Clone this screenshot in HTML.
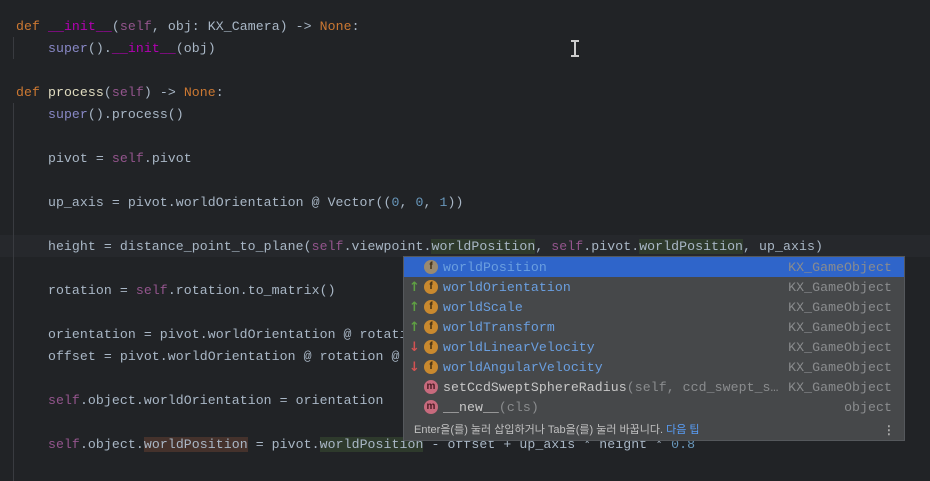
<!DOCTYPE html>
<html><head><style>
body{margin:0;width:930px;height:481px;background:#212326;overflow:hidden;position:relative;font-family:"Liberation Mono",monospace;}
.l{position:absolute;left:16px;height:22px;line-height:23px;font-size:13.2px;letter-spacing:0.075px;color:#a9b7c6;white-space:pre;}
.k{color:#cc7832}.s{color:#94558d}.m{color:#b200b2}.b{color:#8888c6}.n{color:#6897bb}.f{color:#e0dcc0}
.g{position:absolute;left:13px;width:1px;background:#393b40}
#cl{position:absolute;left:0;top:235px;width:930px;height:22px;background:#26282c}
#pop{position:absolute;left:403px;top:256px;width:502px;height:185px;background:#46484a;border:1px solid #55585c;box-sizing:border-box;font-size:13.2px;letter-spacing:0.075px}
.r{position:absolute;left:0;width:500px;height:20px;line-height:21px;white-space:pre}
.sel{background:#2f65ca}
.ic{position:absolute;left:20px;top:3px;width:14px;height:14px;border-radius:7px;background:#c9892f;color:#3b2a10;font:bold 10px/14px "Liberation Sans",sans-serif;text-align:center;letter-spacing:0}
.mi{background:#c76a7d;color:#4a1a22}
.nm{position:absolute;left:39px;color:#6a9fe0}
.ty{position:absolute;right:12px;color:#8a8c8e}
.ar{position:absolute;left:5px;font-family:"DejaVu Sans",sans-serif;font-size:13px;font-weight:bold}
.gr{color:#5fa043}.rd{color:#d25252}
</style></head><body>
<div id="cl"></div>
<div class="g" style="top:37px;height:22px"></div>
<div class="g" style="top:103px;height:378px"></div>
<div class="l" style="top:15px"><span class="k">def</span> <span class="m">__init__</span>(<span class="s">self</span>, obj: KX_Camera) -&gt; <span class="k">None</span>:</div>
<div class="l" style="top:37px">    <span class="b">super</span>().<span class="m">__init__</span>(obj)</div>
<div class="l" style="top:81px"><span class="k">def</span> <span class="f">process</span>(<span class="s">self</span>) -&gt; <span class="k">None</span>:</div>
<div class="l" style="top:103px">    <span class="b">super</span>().process()</div>
<div class="l" style="top:147px">    pivot = <span class="s">self</span>.pivot</div>
<div class="l" style="top:191px">    up_axis = pivot.worldOrientation @ Vector((<span class="n">0</span>, <span class="n">0</span>, <span class="n">1</span>))</div>
<div class="l" style="top:235px">    height = distance_point_to_plane(<span class="s">self</span>.viewpoint.<span style="background:#2e3a2c">worldPosition</span>, <span class="s">self</span>.pivot.<span style="background:#2e3a2c">worldPosition</span>, up_axis)</div>
<div class="l" style="top:279px">    rotation = <span class="s">self</span>.rotation.to_matrix()</div>
<div class="l" style="top:323px">    orientation = pivot.worldOrientation @ rotation</div>
<div class="l" style="top:345px">    offset = pivot.worldOrientation @ rotation @</div>
<div class="l" style="top:389px">    <span class="s">self</span>.object.worldOrientation = orientation</div>
<div class="l" style="top:433px">    <span class="s">self</span>.object.<span style="background:#45322c">worldPosition</span> = pivot.<span style="background:#2e3a2c">worldPosition</span> - offset + up_axis * height * <span class="n">0.8</span></div>
<div style="position:absolute;left:574px;top:40px;width:2px;height:17px;background:#ccc"></div>
<div style="position:absolute;left:571px;top:40px;width:8px;height:2px;background:#ccc"></div>
<div style="position:absolute;left:571px;top:55px;width:8px;height:2px;background:#ccc"></div>
<div id="pop">
<div class="r sel" style="top:0"><span class="ic" style="background:#9a8a70">f</span><span class="nm">worldPosition</span><span class="ty">KX_GameObject</span></div>
<div class="r" style="top:20px"><span class="ar gr">↑</span><span class="ic">f</span><span class="nm">worldOrientation</span><span class="ty">KX_GameObject</span></div>
<div class="r" style="top:40px"><span class="ar gr">↑</span><span class="ic">f</span><span class="nm">worldScale</span><span class="ty">KX_GameObject</span></div>
<div class="r" style="top:60px"><span class="ar gr">↑</span><span class="ic">f</span><span class="nm">worldTransform</span><span class="ty">KX_GameObject</span></div>
<div class="r" style="top:80px"><span class="ar rd">↓</span><span class="ic">f</span><span class="nm">worldLinearVelocity</span><span class="ty">KX_GameObject</span></div>
<div class="r" style="top:100px"><span class="ar rd">↓</span><span class="ic">f</span><span class="nm">worldAngularVelocity</span><span class="ty">KX_GameObject</span></div>
<div class="r" style="top:120px"><span class="ic mi">m</span><span class="nm" style="color:#c8c8c8">setCcdSweptSphereRadius<span style="color:#8a8c8e">(self, ccd_swept_s…</span></span><span class="ty">KX_GameObject</span></div>
<div class="r" style="top:140px"><span class="ic mi">m</span><span class="nm" style="color:#c8c8c8">__new__<span style="color:#8a8c8e">(cls)</span></span><span class="ty">object</span></div>
<div style="position:absolute;left:10px;top:163px;font:11px/20px 'Liberation Sans','Noto Sans CJK KR',sans-serif;color:#c0c0c0;letter-spacing:0">Enter을(를) 눌러 삽입하거나 Tab을(를) 눌러 바꿉니다. <span style="color:#589df6">다음 팁</span></div>
<div style="position:absolute;right:9px;top:166px;font:bold 12px/14px 'Liberation Sans';color:#aaa">⋮</div>
</div>
</body></html>
